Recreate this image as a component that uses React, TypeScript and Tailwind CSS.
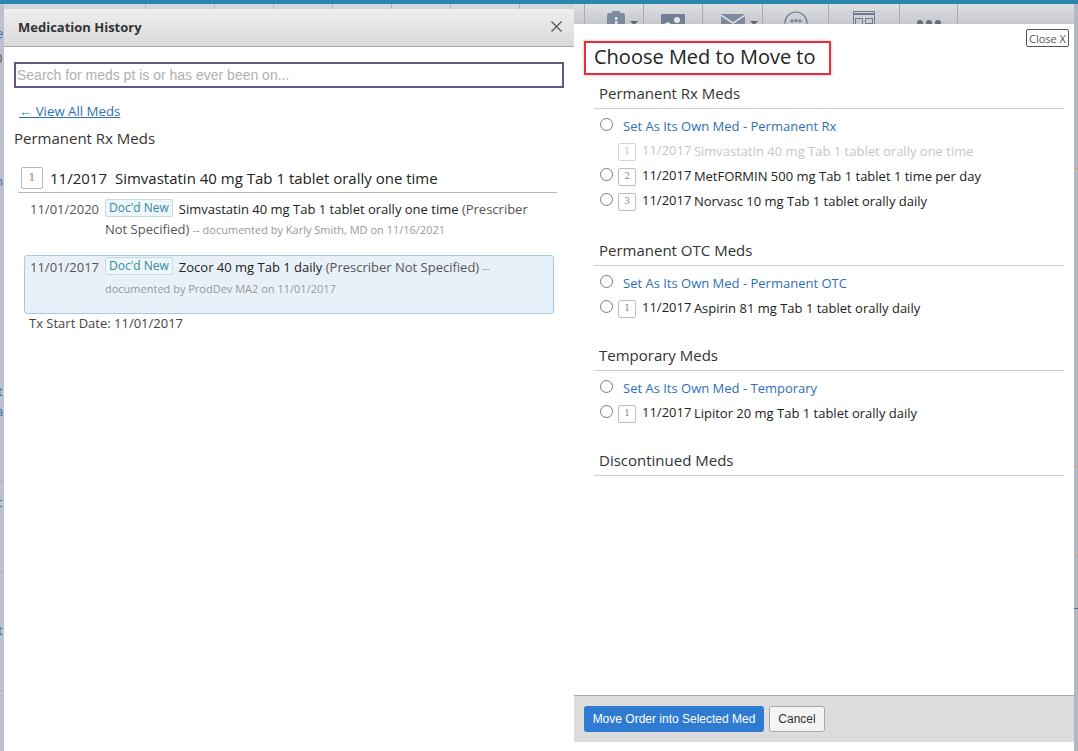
const LEFT_TABS = [142, 69, 59, 59, 59, 59, 69];
const RIGHT_TABS = [11, 59, 59, 60, 66, 71, 58];

function Caret({ top }: { top: string }) {
  return <span className={`${top} ml-[5px] h-0 w-0 border-x-[4px] border-t-[4px] border-x-transparent border-t-[#5f6670]`} />;
}

function ToolbarIcon({ index }: { index: number }) {
  if (index === 1)
    return (
      <div className="flex pl-[22px] pt-[7px]">
        <svg width="18" height="24" viewBox="0 0 18 24">
          <rect x="0" y="2" width="18" height="22" rx="3" fill="#7d8b9e" />
          <rect x="5" y="0" width="8" height="4" rx="1" fill="#7d8b9e" />
          <rect x="8" y="6" width="2.5" height="3" fill="#dfe1e6" />
          <rect x="8" y="10" width="2.5" height="10" fill="#dfe1e6" />
        </svg>
        <Caret top="mt-[10px]" />
      </div>
    );
  if (index === 2)
    return (
      <div className="flex justify-center pt-[10px]">
        <svg width="24" height="20" viewBox="0 0 24 20">
          <rect width="24" height="20" rx="1" fill="#717f92" />
          <circle cx="16" cy="6" r="3" fill="#e4e6ea" />
          <path d="M3 10l4-2 3 2-3 3z" fill="#e4e6ea" />
        </svg>
      </div>
    );
  if (index === 3)
    return (
      <div className="flex pl-[18px] pt-[10px]">
        <svg width="24" height="18" viewBox="0 0 24 18">
          <rect width="24" height="18" fill="#7d8b9e" />
          <path d="M0 1l12 8 12-8" fill="none" stroke="#e4e6ea" strokeWidth="1.5" />
        </svg>
        <Caret top="mt-[7px]" />
      </div>
    );
  if (index === 4)
    return (
      <div className="flex justify-center pt-[7px]">
        <svg width="24" height="24" viewBox="0 0 24 24">
          <circle cx="12" cy="12" r="11" fill="none" stroke="#6f7c8e" strokeWidth="1.2" />
          <circle cx="8" cy="10" r="1.8" fill="#7d8b9e" />
          <circle cx="12" cy="9.5" r="1.8" fill="#7d8b9e" />
          <circle cx="16" cy="10" r="1.8" fill="#7d8b9e" />
          <rect x="6" y="13" width="12" height="5" rx="2" fill="#7d8b9e" />
        </svg>
      </div>
    );
  if (index === 5)
    return (
      <div className="flex justify-center pt-[7px]">
        <svg width="22" height="20" viewBox="0 0 22 20">
          <rect x="0.5" y="0.5" width="21" height="19" fill="none" stroke="#6f7c8e" />
          <rect x="0" y="2" width="22" height="2" fill="#6f7c8e" />
          <rect x="2.5" y="7.5" width="7" height="12" fill="none" stroke="#6f7c8e" />
          <rect x="12.5" y="7.5" width="7" height="5" fill="none" stroke="#6f7c8e" />
        </svg>
      </div>
    );
  if (index === 6)
    return (
      <div className="flex justify-center gap-[3px] pt-[16px]">
        <span className="h-[6px] w-[6px] rounded-full bg-[#65707f]" />
        <span className="h-[6px] w-[6px] rounded-full bg-[#65707f]" />
        <span className="h-[6px] w-[6px] rounded-full bg-[#65707f]" />
      </div>
    );
  return null;
}

function NumBox({ n, big, faded }: { n: number; big?: boolean; faded?: boolean }) {
  return (
    <span
      className={`flex shrink-0 items-center justify-center rounded-[2px] border font-['DejaVu_Serif',serif] ${
        big ? "h-[22px] w-[22px] border-[#b5b5b5] text-[11px] text-[#888]" : "h-[18px] w-[18px] border-[#bdbdbd] text-[9px]"
      } ${faded ? "border-[#d6d6d6] text-[#c4c4c4]" : "text-[#8a8a8a]"}`}
    >
      {n}
    </span>
  );
}

function Radio() {
  return <input type="radio" name="target" className="-mt-[5px] h-[13px] w-[13px] shrink-0 appearance-none rounded-full border border-[#7b7b7b] bg-white" />;
}

function OwnMed({ label }: { label: string }) {
  return (
    <div className="flex h-[25px] items-center pl-[6px]">
      <Radio />
      <a className="ml-[10px] text-[13px] text-[#2f6fb5]">{label}</a>
    </div>
  );
}

function MedRow({ n, med, disabled }: { n: number; med: string; disabled?: boolean }) {
  return (
    <div className={`flex h-[25px] items-center pl-[6px] text-[13px] ${disabled ? "text-[#c6c6c6]" : "text-[#222]"}`}>
      {disabled ? <span className="w-[13px]" /> : <Radio />}
      <span className="ml-[5px]"><NumBox n={n} faded={disabled} /></span>
      <span className="ml-[6px] -mt-[1px]">11/2017</span>
      <span className="ml-[2.5px]">{med}</span>
    </div>
  );
}

function SectionHead({ title }: { title: string }) {
  return (
    <div className="mb-[5px] flex h-[30px] items-center border-b border-[#cfcfcf] pl-[5px] text-[15px] text-[#333]">
      {title}
    </div>
  );
}

function Badge() {
  return (
    <span className="mr-[6px] inline-block h-[18px] rounded-[2px] border border-[#c4dbe8] bg-[#eef6fa] px-[3px] align-top text-[12px] leading-[15px] text-[#2e8aa8]">
      Doc'd New
    </span>
  );
}

export default function App() {
  return (
    <div className="relative flex h-[751px] w-[1078px] flex-col overflow-hidden bg-[#bcc1cb] font-['Open_Sans',sans-serif]">
      <div className="h-[4px] shrink-0 bg-[#2a86ae]" />
      <div className="flex min-h-0 flex-1">
        {/* sliver of the page behind the modal */}
        <div className="relative w-[4px] shrink-0 overflow-hidden text-[13px] text-[#2f6fb5]">
          <span className="absolute -left-[4px] top-[20px]">e</span>
          <span className="absolute -left-[5px] top-[45px] text-[#555]">0</span>
          <span className="absolute -left-[5px] top-[168px]">n</span>
          <span className="absolute -left-[2px] top-[378px]">t</span>
          <span className="absolute -left-[4px] top-[398px]">a</span>
          <span className="absolute -left-[4px] top-[489px]">c</span>
          <span className="absolute -left-[2px] top-[617px]">t</span>
          <div className="absolute top-[477px] h-px w-full bg-[#a8adb8]" />
          <div className="absolute top-[567px] h-px w-full bg-[#a8adb8]" />
          <div className="absolute top-[686px] h-px w-full bg-[#a8adb8]" />
        </div>

        {/* Medication history */}
        <div className="flex w-[570px] shrink-0 flex-col">
          <div className="flex h-[5px] shrink-0 bg-[#d3d5da]">
            {LEFT_TABS.map((w, i) => (
              <div key={i} className="shrink-0 border-r border-[#aeb1b7]" style={{ width: w }} />
            ))}
          </div>
          <div className="flex-1 bg-white">
            <div className="flex h-[38px] items-center justify-between border-b border-[#a6a6a6] bg-gradient-to-b from-[#efefef] to-[#d9d9d9] pl-[14px] pr-[11px]">
              <h1 className="text-[13px] font-bold text-[#333]">Medication History</h1>
              <svg width="13" height="13" viewBox="0 0 13 13" className="-mt-[2px]">
                <path d="M1.5 1.5l10 10M11.5 1.5l-10 10" stroke="#555" strokeWidth="1.2" fill="none" />
              </svg>
            </div>
            <div className="px-[10px] pt-[15px]">
              <input
                placeholder="Search for meds pt is or has ever been on..."
                className="h-[26px] w-[550px] border-2 border-[#5d5985] px-[1px] font-['Liberation_Sans',sans-serif] text-[14px] placeholder:text-[#b0b0b0]"
              />
              <a className="mt-[14px] ml-[5px] block text-[13.25px] leading-[18px] text-[#2f6fb5] underline">← View All Meds</a>
              <h2 className="mt-[8px] text-[15px] leading-[20px] text-[#333]">Permanent Rx Meds</h2>
            </div>
            <div className="ml-[14px] mt-[19px] flex h-[26px] w-[539px] items-start gap-[7px] border-b border-[#b5b5b5] pl-[3px] text-[15px] leading-[22px] text-[#222]">
              <NumBox n={1} big />
              <span>
                11/2017<span className="ml-[8px]">Simvastatin 40 mg Tab 1 tablet orally one time</span>
              </span>
            </div>
            <div className="ml-[26px] mt-[6px] flex w-[510px] text-[13px] leading-[20px] text-[#555]">
              <span className="w-[75px] shrink-0">11/01/2020</span>
              <p>
                <Badge />
                <span className="text-[#222]">Simvastatin 40 mg Tab 1 tablet orally one time</span> (Prescriber Not Specified){" "}
                <span className="text-[11px] text-[#999]">-- documented by Karly Smith, MD on 11/16/2021</span>
              </p>
            </div>
            <div className="ml-[20px] mt-[15px] mb-[1px] flex h-[59px] w-[530px] rounded-[3px] border border-[#a9c8e2] bg-[#e8f1f9] pl-[5px] pr-[18px] pt-[1px] text-[13px] leading-[20px] text-[#555]">
              <span className="w-[75px] shrink-0">11/01/2017</span>
              <p>
                <Badge />
                <span className="text-[#222]">Zocor 40 mg Tab 1 daily</span> (Prescriber Not Specified){" "}
                <span className="text-[11px] text-[#999]">-- documented by ProdDev MA2 on 11/01/2017</span>
              </p>
            </div>
            <p className="ml-[25px] -mt-[1px] text-[13px] leading-[18px] text-[#444]">Tx Start Date: 11/01/2017</p>
          </div>
        </div>

        {/* Choose med panel */}
        <div className="flex w-[500px] shrink-0 flex-col">
          <div className="flex h-[20px] shrink-0 overflow-hidden bg-gradient-to-b from-[#dfe0e4] to-[#c6c8ce]">
            {RIGHT_TABS.map((w, i) => (
              <div key={i} className="h-full shrink-0 border-r border-[#a9acb3]" style={{ width: w }}>
                <ToolbarIcon index={i} />
              </div>
            ))}
          </div>
          <div className="flex min-h-0 flex-1 flex-col bg-white">
            <div className="relative h-[671px] shrink-0 rounded-tr-[3px] pl-[20px] pr-[10px] pt-[17px]">
              <button className="absolute right-[5px] top-[5px] h-[18px] w-[43px] rounded-[2px] border border-[#555] text-[11px] leading-[15px] text-[#555]">
                Close X
              </button>
              <div className="-ml-[10px] h-[34px] w-[247px] border-2 border-[#ec2a3a] pl-[8px] text-[20px] leading-[27px] text-[#222] shadow-[0_0_3px_rgba(0,0,0,0.25)]">
                Choose Med to Move to
              </div>
              <div className="mt-[4px] mb-[22px]">
                <SectionHead title="Permanent Rx Meds" />
                <OwnMed label="Set As Its Own Med - Permanent Rx" />
                <MedRow n={1} med="Simvastatin 40 mg Tab 1 tablet orally one time" disabled />
                <MedRow n={2} med="MetFORMIN 500 mg Tab 1 tablet 1 time per day" />
                <MedRow n={3} med="Norvasc 10 mg Tab 1 tablet orally daily" />
              </div>
              <div className="mb-[20px]">
                <SectionHead title="Permanent OTC Meds" />
                <OwnMed label="Set As Its Own Med - Permanent OTC" />
                <MedRow n={1} med="Aspirin 81 mg Tab 1 tablet orally daily" />
              </div>
              <div className="mb-[20px]">
                <SectionHead title="Temporary Meds" />
                <OwnMed label="Set As Its Own Med - Temporary" />
                <MedRow n={1} med="Lipitor 20 mg Tab 1 tablet orally daily" />
              </div>
              <SectionHead title="Discontinued Meds" />
            </div>
            <div className="flex h-[47px] shrink-0 items-center gap-[5px] border-t border-[#a9a9a9] bg-[#dcdcdc] pl-[10px] font-['Liberation_Sans',sans-serif] text-[12px]">
              <button className="h-[26px] w-[180px] rounded-[3px] bg-[#2f7bd1] text-white">Move Order into Selected Med</button>
              <button className="h-[26px] w-[56px] rounded-[3px] border border-[#a8a8a8] bg-[#f4f4f4] text-[#333]">Cancel</button>
            </div>
          </div>
        </div>

        <div className="relative w-[4px] shrink-0 overflow-hidden bg-[#b3b8c4]">
          <div className="absolute top-[164px] h-px w-full bg-[#c9a36a]" />
          <div className="absolute top-[462px] h-px w-full bg-[#c9a36a]" />
          <div className="absolute top-[551px] h-px w-full bg-[#c9a36a]" />
          <div className="absolute top-[604px] h-px w-full bg-[#3f6ea8]" />
        </div>
      </div>
    </div>
  );
}
